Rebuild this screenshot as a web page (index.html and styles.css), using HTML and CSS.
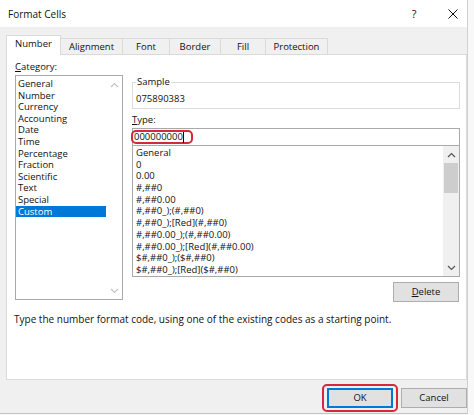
FILE: index.html
```html
<!DOCTYPE html>
<html>
<head>
<meta charset="utf-8">
<title>Format Cells</title>
<link rel="stylesheet" href="styles.css">
</head>
<body>
<div class="dialog">
  <div class="titlebar">
    <span class="title">Format Cells</span>
    <span class="help">?</span>
    <span class="close"><svg width="10" height="10" viewBox="0 0 10 10"><path d="M0.5 0.5 L9.5 9.5 M9.5 0.5 L0.5 9.5" stroke="#111" stroke-width="1" fill="none"/></svg></span>
  </div>
  <div class="content">
    <div class="tabs">
      <div class="tab active w-number">Number</div>
      <div class="tab w-align">Alignment</div>
      <div class="tab w-font">Font</div>
      <div class="tab w-border">Border</div>
      <div class="tab w-fill">Fill</div>
      <div class="tab w-prot">Protection</div>
    </div>
    <div class="panel">
      <div class="grid">
        <div class="left">
          <div class="label"><u>C</u>ategory:</div>
          <div class="listbox cat">
            <div class="items">
              <div class="item">General</div>
              <div class="item">Number</div>
              <div class="item">Currency</div>
              <div class="item">Accounting</div>
              <div class="item">Date</div>
              <div class="item">Time</div>
              <div class="item">Percentage</div>
              <div class="item">Fraction</div>
              <div class="item">Scientific</div>
              <div class="item">Text</div>
              <div class="item">Special</div>
              <div class="item selected">Custom</div>
            </div>
            <div class="vscroll disabled">
              <div class="arrow"><svg width="9" height="6" viewBox="0 0 9 6"><path d="M1 5 L4.5 1.5 L8 5" stroke="#c4c4c4" stroke-width="1.2" fill="none"/></svg></div>
              <div class="track"></div>
              <div class="arrow"><svg width="9" height="6" viewBox="0 0 9 6"><path d="M1 1 L4.5 4.5 L8 1" stroke="#c4c4c4" stroke-width="1.2" fill="none"/></svg></div>
            </div>
          </div>
        </div>
        <div class="right">
          <fieldset class="sample">
            <legend>Sample</legend>
            <div class="sample-val">075890383</div>
          </fieldset>
          <div class="label type-label"><u>T</u>ype:</div>
          <div class="typebox"><span class="hl">000000000<span class="caret"></span></span></div>
          <div class="listbox fmt">
            <div class="items">
              <div class="item">General</div>
              <div class="item">0</div>
              <div class="item">0.00</div>
              <div class="item">#,##0</div>
              <div class="item">#,##0.00</div>
              <div class="item">#,##0_);(#,##0)</div>
              <div class="item">#,##0_);[Red](#,##0)</div>
              <div class="item">#,##0.00_);(#,##0.00)</div>
              <div class="item">#,##0.00_);[Red](#,##0.00)</div>
              <div class="item">$#,##0_);($#,##0)</div>
              <div class="item">$#,##0_);[Red]($#,##0)</div>
            </div>
            <div class="vscroll">
              <div class="arrow"><svg width="9" height="6" viewBox="0 0 9 6"><path d="M1 5 L4.5 1.5 L8 5" stroke="#555" stroke-width="1.2" fill="none"/></svg></div>
              <div class="thumb"></div>
              <div class="track"></div>
              <div class="arrow"><svg width="9" height="6" viewBox="0 0 9 6"><path d="M1 1 L4.5 4.5 L8 1" stroke="#555" stroke-width="1.2" fill="none"/></svg></div>
            </div>
          </div>
          <div class="delete-row"><button class="btn del"><u>D</u>elete</button></div>
        </div>
      </div>
      <p class="hint">Type the number format code, using one of the existing codes as a starting point.</p>
    </div>
    <div class="buttons">
      <span class="focus-ring"><button class="btn ok">OK</button></span>
      <button class="btn cancel">Cancel</button>
    </div>
  </div>
</div>
</body>
</html>
```

FILE: styles.css
```css
* { box-sizing: border-box; }
html, body { margin: 0; padding: 0; }
body {
  width: 474px;
  height: 415px;
  background: #f8f8f8;
  font-family: "Open Sans", "Noto Sans", sans-serif;
  font-size: 9.5px;
  color: #111;
  overflow: hidden;
}
.dialog {
  width: 468px;
  height: 414px;
  background: #f0f0f0;
  border-right: 1px solid #d0d0d0;
  border-bottom: 1px solid #c4c4c4;
  display: flex;
  flex-direction: column;
}
.titlebar {
  height: 27px;
  flex: none;
  background: #fff;
  display: flex;
  align-items: center;
  padding-left: 8px;
}
.title { flex: 1; font-size: 10px; line-height: 12px; }
.help { width: 10px; text-align: center; font-size: 11px; margin-right: 29px; }
.close { width: 10px; height: 10px; margin-right: 9px; display: flex; }

.content { padding: 8px 0 0 6px; }

.tabs {
  display: flex;
  align-items: flex-start;
  height: 20px;
  margin-bottom: -1px;
  position: relative;
  z-index: 1;
}
.tab {
  height: 16px;
  margin-top: 3px;
  padding-top: 2px;
  line-height: 12px;
  text-align: center;
  background: #f0f0f0;
  border: 1px solid #dadada;
  border-bottom: none;
  border-left: none;
}
.tab.active {
  height: 20px;
  margin-top: 0;
  background: #fff;
  border-left: 1px solid #dadada;
}
.w-number { width: 55px; }
.w-align { width: 62px; }
.w-font { width: 47px; }
.w-border { width: 51px; }
.w-fill { width: 45px; }
.w-prot { width: 62px; }

.panel {
  width: 461px;
  height: 326px;
  background: #fff;
  border: 1px solid #dadada;
  padding: 6px 6px 0 8px;
}
.grid {
  display: grid;
  grid-template-columns: 108px 328px;
  column-gap: 9px;
}
.label { line-height: 12px; }

.listbox {
  display: flex;
  border: 1px solid #a9a9a9;
  background: #fff;
  overflow: hidden;
}
.listbox .items { flex: 1; overflow: hidden; }
.listbox.cat { height: 225px; margin-top: 2px; }
.listbox.cat .items { padding-top: 2px; }
.listbox.cat .item { line-height: 11.6px; height: 11.6px; padding-left: 2px; white-space: nowrap; }
.listbox.cat .item.selected { background: #0078d7; color: #fff; }

.vscroll {
  width: 16px;
  flex: none;
  display: flex;
  flex-direction: column;
  background: #f0f0f0;
}
.vscroll.disabled { background: #fff; }
.vscroll .arrow {
  height: 17px;
  flex: none;
  display: flex;
  align-items: center;
  justify-content: center;
}
.vscroll .track { flex: 1; }
.vscroll .thumb { height: 30px; margin: 0 1px; background: #cdcdcd; flex: none; }

.sample {
  margin: 15px 0 0;
  padding: 5px 3px 3px;
  border: 1px solid #dcdcdc;
  min-width: 0;
}
.sample legend {
  padding: 0 1px;
  line-height: 12px;
}
.sample-val { line-height: 12px; }

.type-label { margin-top: 5px; }
.typebox {
  height: 18px;
  margin-top: 2px;
  border: 1px solid #a9a9a9;
  display: flex;
  align-items: center;
  background: #fff;
  position: relative;
  z-index: 1;
}
.hl {
  display: inline-flex;
  align-items: center;
  height: 14px;
  margin-left: -2px;
  padding: 0 7px 0 1px;
  border: 2px solid #d5283a;
  border-radius: 5px;
  line-height: 12px;
}
.caret { width: 1px; height: 11px; background: #000; }

.listbox.fmt { height: 132px; margin-top: -1px; }
.listbox.fmt .items { padding-top: 1px; }
.listbox.fmt .item { line-height: 11.7px; height: 11.7px; padding-left: 3px; white-space: nowrap; }

.delete-row { display: flex; justify-content: flex-end; margin-top: 5px; padding-right: 1px; }

.btn {
  font-family: inherit;
  font-size: 9.5px;
  color: #111;
  background: #e1e1e1;
  border: 1px solid #adadad;
  height: 20px;
  padding: 0;
  margin: 0;
  line-height: 12px;
}
.btn.del { width: 66px; }

.hint { margin: 11px 0 0 -1px; line-height: 12px; font-size: 10px; }

.buttons {
  display: flex;
  justify-content: flex-end;
  align-items: center;
  gap: 3px;
  margin-top: 4px;
}
.focus-ring {
  display: flex;
  padding: 2px 3px;
  border: 2px solid #d5283a;
  border-radius: 5px;
}
.btn.ok { width: 66px; border: 2px solid #0078d7; }
.btn.cancel { width: 66px; }
```
